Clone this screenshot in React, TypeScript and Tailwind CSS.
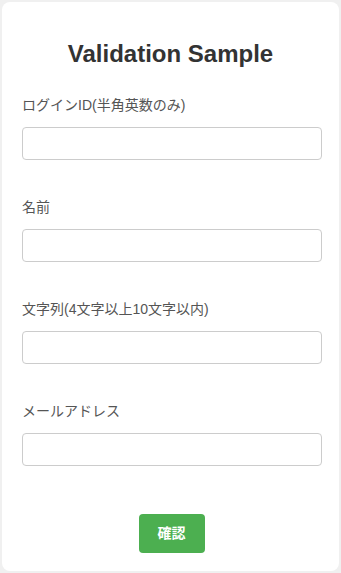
import React from "react";

const fields = [
  { label: "ログインID(半角英数のみ)", type: "text" },
  { label: "名前", type: "text" },
  { label: "文字列(4文字以上10文字以内)", type: "text" },
  { label: "メールアドレス", type: "email" },
];

export default function App() {
  return (
    <div className="min-h-[573px] bg-[#f0f0f0] p-[2px]">
      <div
        className="min-h-[569px] rounded-[8px] bg-white px-[20px] pt-[38px] pb-[18px]"
        style={{ fontFamily: '"Liberation Sans", "Noto Sans CJK JP", sans-serif' }}
      >
        <h1 className="text-center text-[24px] font-bold leading-[28px] text-[#333]">
          Validation Sample
        </h1>
        <form className="mt-[27px]" onSubmit={(e) => e.preventDefault()}>
          {fields.map((f) => (
            <div key={f.label} className="mb-[37px]">
              <label className="block text-[14px] leading-[20px] text-[#555]">
                {f.label}
              </label>
              <input
                type={f.type}
                className="mt-[12px] block h-[33px] w-[300px] rounded-[4px] border border-[#ccc] bg-white px-2 text-[14px] outline-none"
              />
            </div>
          ))}
          <div className="flex justify-center pt-[11px] pl-[2px]">
            <button
              type="submit"
              className="h-[39px] w-[66px] rounded-[4px] bg-[#4caf50] text-[14px] font-bold text-white"
            >
              確認
            </button>
          </div>
        </form>
      </div>
    </div>
  );
}
